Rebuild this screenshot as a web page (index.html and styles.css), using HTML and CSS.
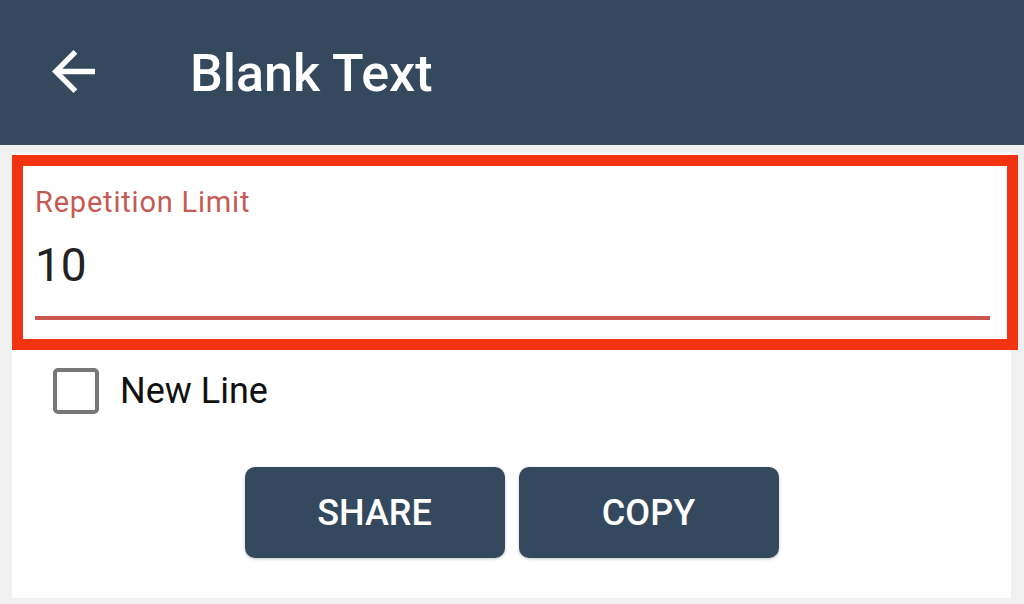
FILE: index.html
```html
<!DOCTYPE html>
<html lang="en">
<head>
    <meta charset="UTF-8" />
    <meta name="viewport" content="width=device-width, initial-scale=1.0" />
    <title>Blank Text</title>
    <link rel="stylesheet" href="styles.css">
</head>
<body>

    <div class="top-bar">
        <button class="back-btn" aria-label="Back">
            <svg width="43" height="43" viewBox="4 4 16 16">
                <path d="M20 11H7.83l5.59-5.59L12 4l-8 8 8 8 1.41-1.41L7.83 13H20v-2z" fill="#fff" />
            </svg>
        </button>
        <h1 class="title">Blank Text</h1>
    </div>

    <div id="content">
        <div class="field-wrap">
            <label class="field-label" for="repeatLimit">Repetition Limit</label>
            <input class="field-input" id="repeatLimit" type="text" value="10" />
            <div class="field-line"></div>
        </div>

        <label class="check-row">
            <span class="check-box"></span>
            New Line
        </label>

        <div class="actions">
            <button class="action-btn">SHARE</button>
            <button class="action-btn">COPY</button>
        </div>
    </div>

</body>
</html>
```

FILE: styles.css
```css
body {
    background-color: #f0f0f0;
    margin: 0;
    font-family: Roboto, "Noto Sans", sans-serif;
}

.top-bar {
    display: flex;
    align-items: center;
    height: 145px;
    padding-left: 52px;
    background-color: #34495e;
    color: #fff;
}

.back-btn {
    display: flex;
    background: none;
    border: none;
    padding: 0;
    margin-top: -2px;
    cursor: pointer;
}

.title {
    margin: 2px 0 0 95px;
    font-size: 52px;
    font-weight: 500;
    line-height: 1;
}

#content {
    background-color: #fff;
    margin: 7px 13px 0 12px;
    height: 446px;
    padding-top: 3px;
    box-sizing: border-box;
}

/* highlighted input field */
.field-wrap {
    border: 11px solid #f2330f;
    margin-right: -7px;
    padding: 20px 17px 19px 12px;
}

.field-label {
    display: block;
    color: #c65a52;
    font-size: 29px;
    letter-spacing: 0.8px;
    line-height: 32px;
}

.field-input {
    display: block;
    width: 100%;
    margin-top: 20px;
    padding: 0;
    border: none;
    outline: none;
    font-family: inherit;
    font-size: 46px;
    line-height: 54px;
    height: 54px;
    color: #222;
}

.field-line {
    height: 4px;
    margin-top: 24px;
    background-color: #c9574f;
}

.check-row {
    display: flex;
    align-items: center;
    gap: 21px;
    margin: 18px 0 0 41px;
    font-size: 36px;
    line-height: 42px;
    color: #111;
}

.check-box {
    width: 46px;
    height: 46px;
    border: 4px solid #777;
    border-radius: 5px;
    box-sizing: border-box;
}

.actions {
    display: flex;
    justify-content: center;
    gap: 14px;
    margin-top: 53px;
}

.action-btn {
    width: 260px;
    height: 91px;
    background-color: #34495e;
    color: #fff;
    border: none;
    border-radius: 10px;
    box-shadow: 0 1px 3px rgba(0, 0, 0, 0.25);
    font-family: inherit;
    font-size: 36px;
    font-weight: 500;
    cursor: pointer;
}
```
